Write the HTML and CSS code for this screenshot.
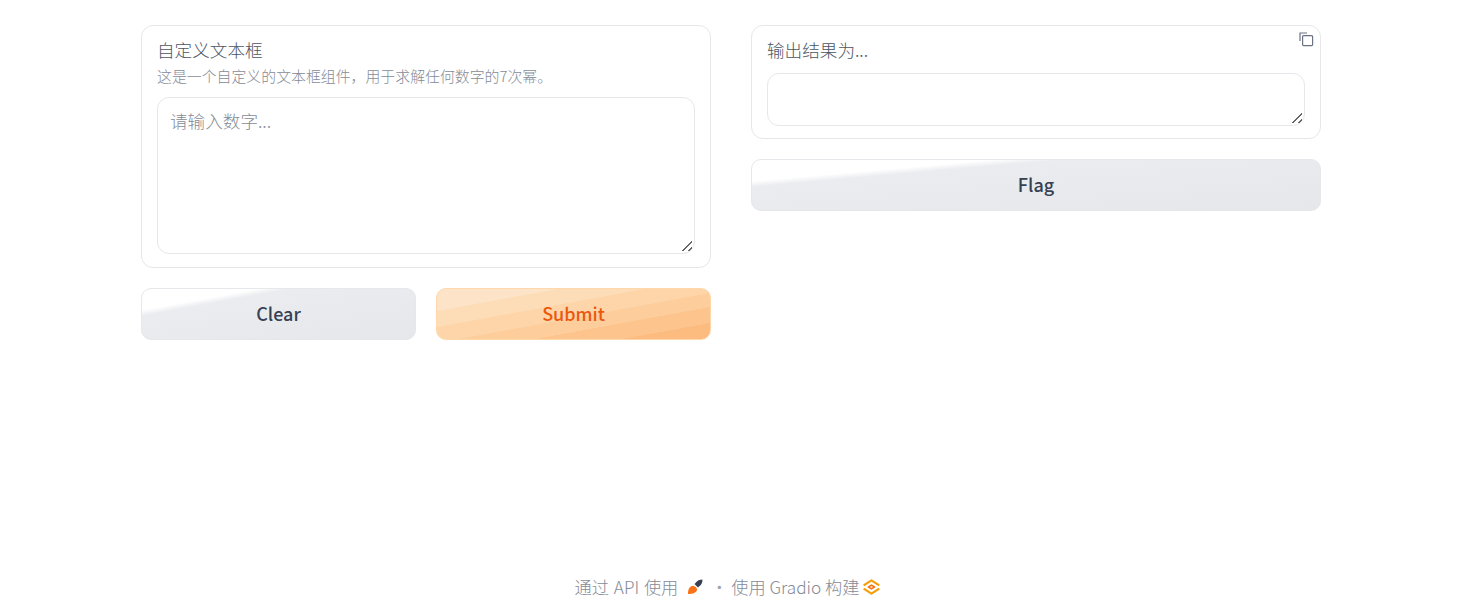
FILE: index.html
```html
<!DOCTYPE html>
<html lang="zh">
<head>
    <meta charset="UTF-8">
    <title>Gradio</title>
    <link rel="stylesheet" href="styles.css">
</head>
<body>
    <main class="container">
        <div class="column">
            <div class="block">
                <label class="label" for="input">自定义文本框</label>
                <p class="info">这是一个自定义的文本框组件，用于求解任何数字的7次幂。</p>
                <textarea id="input" class="box box-input" placeholder="请输入数字..."></textarea>
            </div>
            <div class="actions">
                <button class="btn btn-gray">Clear</button>
                <button class="btn btn-primary">Submit</button>
            </div>
        </div>
        <div class="column">
            <div class="block block-output">
                <button class="copy" aria-label="copy">
                    <svg width="15" height="15" viewBox="0 0 15 15" fill="none">
                        <path d="M1 9V1H8" stroke="#6b7280" stroke-width="1.2"/>
                        <rect x="3.6" y="3.6" width="10" height="10" rx="1" stroke="#6b7280" stroke-width="1.2"/>
                    </svg>
                </button>
                <label class="label label-output" for="output">输出结果为...</label>
                <textarea id="output" class="box box-output"></textarea>
            </div>
            <button class="btn btn-gray">Flag</button>
        </div>
    </main>

    <footer class="footer">
        <a class="footer-link footer-link-api">通过 API 使用
            <svg width="16" height="16" viewBox="0 0 16 16">
                <path d="M5 7C8 6.5 10.5 9 10 11C9.5 13.5 6 15 1 15C1 12 1.5 8 5 7Z" fill="#f97316"/>
                <path d="M8.5 4C10 1.5 13 0.5 15.5 0.5C15.5 3 14.5 6 12 7.5L11 8.5L7.5 5Z" fill="#374151"/>
            </svg>
        </a>
        <span class="dot">·</span>
        <a class="footer-link footer-link-built">使用 Gradio 构建
            <svg width="20" height="18" viewBox="0 0 18 16" fill="none" stroke="#f59e0b" stroke-width="2" stroke-linejoin="round">
                <path d="M1.5 6.5L8.5 2L15.5 6.5"/>
                <path d="M1.5 9.5L8.5 14L15.5 9.5"/>
                <path d="M5.8 8L8.5 6.3L11.2 8L8.5 9.7Z" stroke="#f97316" stroke-width="1.5"/>
            </svg>
        </a>
    </footer>
</body>
</html>
```

FILE: styles.css
```css
* {
    box-sizing: border-box;
}

body {
    display: flex;
    flex-direction: column;
    height: 100vh;
    margin: 0;
    padding-top: 25px;
    background-color: #fff;
    font-family: "Noto Sans CJK SC", "Noto Sans", sans-serif;
    overflow: hidden;
}

.container {
    display: grid;
    grid-template-columns: 570px 570px;
    gap: 40px;
    width: 1180px;
    margin-left: 141px;
    align-items: start;
}

.column {
    display: flex;
    flex-direction: column;
    gap: 20px;
}

.block {
    position: relative;
    display: flex;
    flex-direction: column;
    padding: 11px 15px 13px;
    background: #fff;
    border: 1px solid #e5e7eb;
    border-radius: 12px;
}

.block-output {
    padding-bottom: 12px;
}

.label {
    font-size: 17.6px;
    line-height: 26px;
    font-weight: 300;
    color: #4b5563;
}

.label-output {
    margin-bottom: 10px;
}

.info {
    margin: 0 0 9px;
    font-size: 14.9px;
    line-height: 25px;
    font-weight: 300;
    color: #858b96;
}

.box {
    display: block;
    width: 100%;
    padding: 10px 12px;
    border: 1px solid #e5e7eb;
    border-radius: 12px;
    background: #fff;
    font-family: inherit;
    font-size: 17.6px;
    line-height: 26px;
    font-weight: 300;
    color: #374151;
    outline: none;
}

.box::placeholder {
    color: #858b96;
}

.box::-webkit-resizer {
    background: linear-gradient(135deg, transparent 53%, #666 53%, #666 61%, transparent 61%, transparent 80%, #666 80%, #666 88%, transparent 88%) no-repeat 2px 2px / 11px 11px;
}

.box-input {
    height: 157px;
}

.box-output {
    height: 53px;
}

.copy {
    position: absolute;
    top: 6px;
    right: 6px;
    padding: 0;
    width: 15px;
    height: 15px;
    border: 0;
    background: none;
}

.actions {
    display: grid;
    grid-template-columns: 1fr 1fr;
    gap: 20px;
}

.btn {
    height: 52px;
    padding-bottom: 4px;
    border-radius: 10px;
    font-family: inherit;
    font-size: 18px;
    font-weight: 500;
}

.btn-gray {
    border: 1px solid #e5e7eb;
    color: #374151;
    background: linear-gradient(to bottom right, #fff 21%, #ebecf0 27%, #e5e7eb 100%);
}

.btn-primary {
    border: 1px solid #fed7aa;
    color: #ea580c;
    background: linear-gradient(to bottom right,
        #fde3c7 0 22%, #fddcb8 22% 38%, #fdd5a9 38% 54%,
        #fdcd9b 54% 68%, #fdc58d 68% 84%, #fdbc7f 84% 100%);
}

.footer {
    display: flex;
    justify-content: center;
    align-items: center;
    margin-top: auto;
    height: 46px;
    padding-bottom: 1px;
    font-size: 17.2px;
    font-weight: 300;
    color: #858b96;
}

.footer-link {
    display: flex;
    align-items: center;
    gap: 9px;
}

.footer-link-api {
    word-spacing: 1px;
}

.footer-link-built {
    gap: 3px;
}

.dot {
    width: 28px;
    padding-left: 4px;
    text-align: center;
    color: #9ca3af;
}
```
